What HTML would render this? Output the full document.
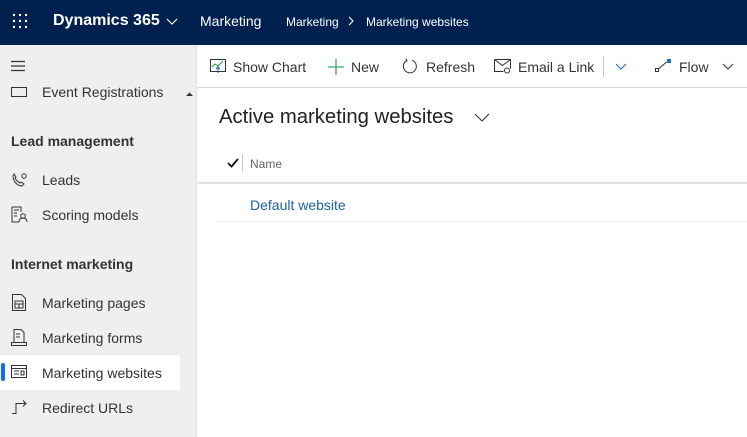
<!DOCTYPE html>
<html><head><meta charset="utf-8"><style>
*{margin:0;padding:0;box-sizing:border-box}
body{width:747px;height:437px;overflow:hidden;font-family:"Liberation Sans",sans-serif;background:#fff;position:relative;color:#333}
.top{position:absolute;left:0;top:0;width:747px;height:45px;background:#002050;color:#fff}
.top div{position:absolute;white-space:nowrap}
.side{position:absolute;left:0;top:45px;width:197px;height:392px;background:#efefef;border-right:1px solid #e1e1e1}
.side div{position:absolute;white-space:nowrap;font-size:14px;color:#333}
.side .h{font-weight:bold;color:#333}
.cmd div{position:absolute;white-space:nowrap;font-size:14px;color:#333;top:59px}
svg{position:absolute}
</style></head><body>
<div class="top">
<svg style="left:12px;top:13px" width="16" height="16" viewBox="0 0 16 16" fill="#fff"><circle cx="2" cy="2" r="1.2"/><circle cx="8" cy="2" r="1.2"/><circle cx="14" cy="2" r="1.2"/><circle cx="2" cy="8" r="1.2"/><circle cx="8" cy="8" r="1.2"/><circle cx="14" cy="8" r="1.2"/><circle cx="2" cy="14" r="1.2"/><circle cx="8" cy="14" r="1.2"/><circle cx="14" cy="14" r="1.2"/></svg>
<div style="left:53px;top:12px;font-size:16px;font-weight:bold">Dynamics 365</div>
<svg style="left:166px;top:18px" width="12" height="8" viewBox="0 0 12 8"><path d="M1 1l5 5 5-5" stroke="#fff" fill="none" stroke-width="1.2"/></svg>
<div style="left:200px;top:13px;font-size:14px">Marketing</div>
<div style="left:286px;top:15px;font-size:12px">Marketing</div>
<svg style="left:348px;top:16px" width="6" height="10" viewBox="0 0 6 10"><path d="M1 1l4 4-4 4" stroke="#fff" fill="none" stroke-width="1.1"/></svg>
<div style="left:366px;top:15px;font-size:12px">Marketing websites</div>
</div>
<div class="side">
<svg style="left:10px;top:15px" width="16" height="12" viewBox="0 0 16 12"><path d="M1 1.5h14M1 6h14M1 10.5h14" stroke="#333" stroke-width="1.2"/></svg>
<svg style="left:11px;top:42px" width="16" height="10" viewBox="0 0 16 10"><rect x="0.5" y="0.5" width="15" height="9" stroke="#333" fill="none"/></svg>
<div style="left:42px;top:39px">Event Registrations</div>
<svg style="left:186px;top:47px" width="7" height="5"><path d="M0 4l3.5-3.5L7 4z" fill="#333"/></svg>
<div class="h" style="left:11px;top:88px">Lead management</div>
<svg style="left:11px;top:127px" width="17" height="16" viewBox="0 0 17 16" fill="none" stroke="#333"><path d="M2 4c0 5 4 10 9 10l2-2-3-2-1 1c-2-1-4-3-5-5l1-1-2-3z"/><circle cx="13" cy="4" r="2.2"/></svg>
<div style="left:42px;top:127px">Leads</div>
<svg style="left:11px;top:161px" width="17" height="17" viewBox="0 0 17 17" fill="none" stroke="#333"><path d="M1 1h9v5M1 1v15h7M3 4h5M3 7h3M3 10h3"/><circle cx="12" cy="10" r="2.3"/><path d="M8 16c0-3 2-4 4-4s4 1 4 4"/></svg>
<div style="left:42px;top:162px">Scoring models</div>
<div class="h" style="left:11px;top:211px">Internet marketing</div>
<svg style="left:12px;top:249px" width="14" height="17" viewBox="0 0 14 17" fill="none" stroke="#333"><path d="M.5.5h9l4 4v12H.5z M3 7h8v7H3z M3 10h8M7 10v4"/></svg>
<div style="left:42px;top:250px">Marketing pages</div>
<svg style="left:11px;top:284px" width="16" height="17" viewBox="0 0 16 17" fill="none" stroke="#333"><path d="M3 .5h7l3 3v10H3z M.5 13.5h15v3H.5z M5 5h4M5 8h4"/></svg>
<div style="left:42px;top:285px">Marketing forms</div>
<div style="left:0;top:310px;width:180px;height:35px;background:#fff"></div>
<div style="left:1px;top:318px;width:4px;height:18px;background:#0f6cff;border-radius:2px"></div>
<svg style="left:11px;top:320px" width="16" height="13" viewBox="0 0 16 13" fill="none" stroke="#333"><rect x=".5" y=".5" width="15" height="12"/><path d="M.5 3.5h15M3 6h5M3 9h5"/><rect x="10" y="6" width="3" height="4"/></svg>
<div style="left:42px;top:320px">Marketing websites</div>
<svg style="left:11px;top:354px" width="16" height="16" viewBox="0 0 16 16" fill="none" stroke="#333"><path d="M1 14.5h4V4.5h10M12 1.5l3 3-3 3"/></svg>
<div style="left:42px;top:355px">Redirect URLs</div>
</div>
<div class="cmd">
<div style="left:198px;top:87px;width:549px;height:1px;background:#d8d8d8"></div>
<svg style="left:210px;top:58px" width="16" height="16" viewBox="0 0 16 16" fill="none"><rect x=".5" y="1.5" width="15" height="12" stroke="#333"/><path d="M2 9l3-3 3 2 5-5" stroke="#1a9a3a"/><path d="M8 15V9M6 11l2-2 2 2" stroke="#1567b0"/></svg>
<div style="left:233px">Show Chart</div>
<svg style="left:328px;top:59px" width="16" height="16"><path d="M8 0v16M0 8h16" stroke="#3ea36a" stroke-width="1.3"/></svg>
<div style="left:351px">New</div>
<svg style="left:402px;top:58px" width="16" height="16" viewBox="0 0 16 16" fill="none" stroke="#333"><path d="M5 2.5A6.5 6.5 0 1 0 10 2.2M4 .5l1 2.5-2.5 1"/></svg>
<div style="left:426px">Refresh</div>
<svg style="left:494px;top:59px" width="18" height="15" viewBox="0 0 18 15" fill="none" stroke="#333"><path d="M.5.5h16v9M.5.5v12h9M.5.5l8 6 8-6"/><circle cx="13" cy="11.5" r="2.5"/></svg>
<div style="left:518px">Email a Link</div>
<div style="left:603px;top:56px;width:1px;height:21px;background:#c8c8c8"></div>
<svg style="left:615px;top:63px" width="12" height="7"><path d="M1 1l5 5 5-5" stroke="#1567b0" fill="none"/></svg>
<svg style="left:655px;top:59px" width="17" height="14" viewBox="0 0 17 14" fill="none"><rect x=".5" y="9.5" width="3" height="3" stroke="#333"/><path d="M3.5 10l8-7" stroke="#333"/><rect x="12" y="0" width="4" height="4" fill="#1a73c8"/></svg>
<div style="left:679px">Flow</div>
<svg style="left:722px;top:63px" width="12" height="7"><path d="M1 1l5 5 5-5" stroke="#333" fill="none"/></svg>
<div style="left:219px;top:106px;font-size:20.3px;color:#222">Active marketing websites</div>
<svg style="left:474px;top:113px" width="16" height="9"><path d="M1 1l7 7 7-7" stroke="#333" fill="none"/></svg>
<svg style="left:227px;top:158px" width="12" height="10"><path d="M1 5l3.5 3.5L11 1" stroke="#111" stroke-width="1.8" fill="none"/></svg>
<div style="left:242px;top:154px;width:1px;height:18px;background:#ccc"></div>
<div style="left:250px;top:157px;font-size:12px;color:#666">Name</div>
<div style="left:198px;top:182px;width:549px;height:2px;background:#e1e1e1"></div>
<div style="left:250px;top:197px;color:#1f62a8">Default website</div>
<div style="left:218px;top:221px;width:529px;height:1px;background:#ececec"></div>
</div>
</body></html>
